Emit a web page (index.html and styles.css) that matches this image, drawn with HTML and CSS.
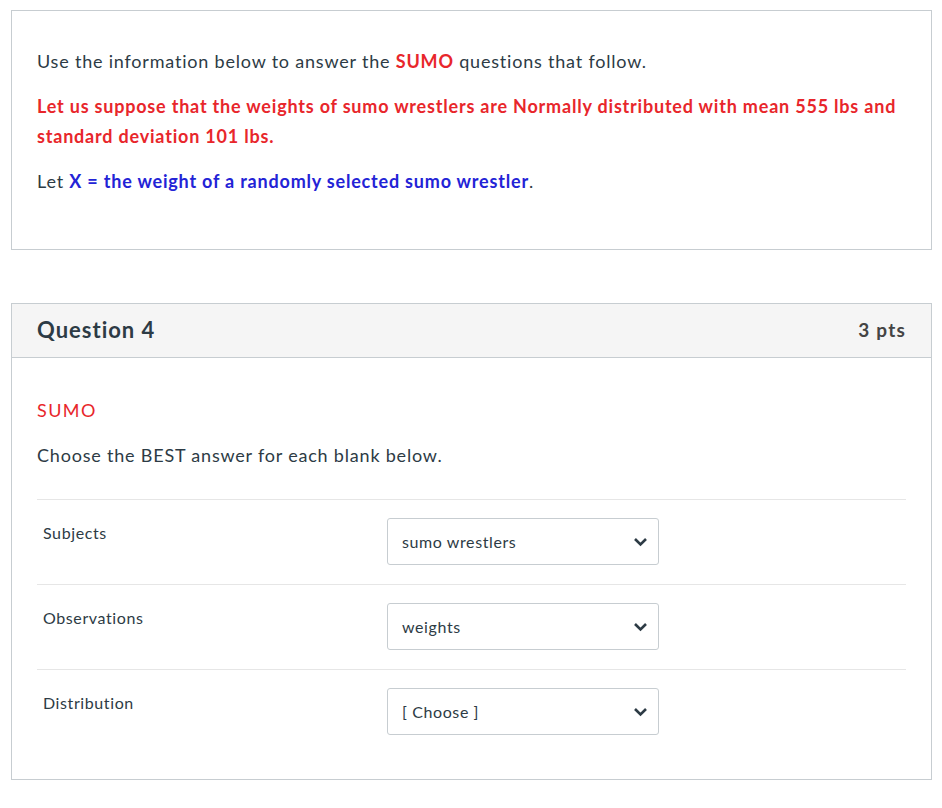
FILE: index.html
```html
<!DOCTYPE html>
<html lang="en">
<head>
  <meta charset="UTF-8" />
  <title>Quiz - Question 4</title>
  <link rel="stylesheet" href="styles.css">
</head>
<body>

  <div class="text-block">
    <p>Use the information below to answer the <strong class="red">SUMO</strong> questions that follow.</p>
    <p class="red"><strong>Let us suppose that the weights of sumo wrestlers are Normally distributed with mean 555 lbs and standard deviation 101 lbs.</strong></p>
    <p>Let <strong class="blue">X = the weight of a randomly selected sumo wrestler</strong>.</p>
  </div>

  <div class="question">
    <div class="question-header">
      <h2>Question 4</h2>
      <span class="points">3 pts</span>
    </div>

    <div class="question-body">
      <p class="red">SUMO</p>
      <p>Choose the BEST answer for each blank below.</p>

      <div class="answers">
        <div class="answer-row">
          <label>Subjects</label>
          <div class="select-box">
            <span>sumo wrestlers</span>
            <svg class="chevron" width="15" height="10" viewBox="0 0 15 10"><path d="M2 2 L7.5 7.5 L13 2" fill="none" stroke="#2d3b45" stroke-width="2.6"/></svg>
          </div>
        </div>
        <div class="answer-row">
          <label>Observations</label>
          <div class="select-box">
            <span>weights</span>
            <svg class="chevron" width="15" height="10" viewBox="0 0 15 10"><path d="M2 2 L7.5 7.5 L13 2" fill="none" stroke="#2d3b45" stroke-width="2.6"/></svg>
          </div>
        </div>
        <div class="answer-row">
          <label>Distribution</label>
          <div class="select-box">
            <span>[ Choose ]</span>
            <svg class="chevron" width="15" height="10" viewBox="0 0 15 10"><path d="M2 2 L7.5 7.5 L13 2" fill="none" stroke="#2d3b45" stroke-width="2.6"/></svg>
          </div>
        </div>
      </div>
    </div>
  </div>

</body>
</html>
```

FILE: styles.css
```css
body {
  margin: 0;
  padding: 10px 10px 0 11px;
  font-family: Lato, "Noto Sans", sans-serif;
  font-size: 18px;
  letter-spacing: 0.8px;
  color: #2d3b45;
  background: #fff;
}

p {
  margin: 0 0 15px;
  line-height: 30px;
}

.red {
  color: #e8262b;
}

.blue {
  color: #2323d6;
}

.text-block {
  border: 1px solid #c7cdd1;
  padding: 35px 25px 38px;
  height: 240px;
  box-sizing: border-box;
}

.question {
  margin-top: 53px;
  border: 1px solid #c7cdd1;
}

.question-header {
  display: flex;
  justify-content: space-between;
  align-items: center;
  height: 54px;
  padding: 0 25px 3px;
  box-sizing: border-box;
  background: #f5f5f5;
  border-bottom: 1px solid #c7cdd1;
}

.question-header h2 {
  margin: 0;
  font-size: 22px;
  font-weight: 700;
  letter-spacing: 1px;
  color: #2d3b45;
}

.points {
  font-size: 19px;
  font-weight: 700;
  letter-spacing: 1.2px;
  color: #444;
}

.question-body {
  padding: 37px 25px 25px;
}

.question-body p.red {
  letter-spacing: 1.4px;
}

.answers {
  margin-top: 29px;
}

.answer-row {
  display: flex;
  align-items: flex-start;
  border-top: 1px solid #e6e6e6;
  padding: 18px 6px 19px;
}

.answer-row label {
  width: 344px;
  font-size: 16px;
  line-height: 24px;
  letter-spacing: 0.6px;
  padding-top: 3px;
}

.select-box {
  display: flex;
  justify-content: space-between;
  align-items: center;
  width: 272px;
  height: 47px;
  box-sizing: border-box;
  padding: 0 10px 0 14px;
  border: 1px solid #c7cdd1;
  border-radius: 3px;
  font-size: 16px;
  letter-spacing: 0.6px;
  color: #2d3b45;
  background: #fff;
}
```
